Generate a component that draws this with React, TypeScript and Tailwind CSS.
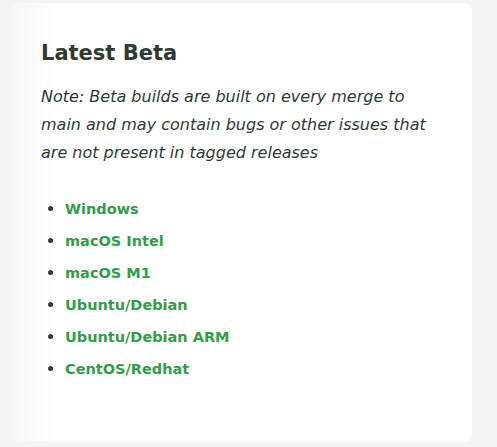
const LINKS = ['Windows', 'macOS Intel', 'macOS M1', 'Ubuntu/Debian', 'Ubuntu/Debian ARM', 'CentOS/Redhat']

export default function App() {
  return (
    <div className="h-[447px] w-[497px] bg-[#f3f3f3] pt-[3px] pl-[9px] font-['DejaVu_Sans',sans-serif]">
      <div className="h-[439px] w-[463px] rounded-lg bg-[linear-gradient(to_right,#f5f5f5,#ffffff_45px)] px-8 pt-[34px]">
        <h2 className="text-[21px] font-bold leading-8 text-[#2e3a31]">Latest Beta</h2>
        <p className="mt-[14px] max-w-[400px] text-[16px] italic leading-[28px] text-[#2e3a31]">
          Note: Beta builds are built on every merge to main and may contain bugs or other issues that are not present in
          tagged releases
        </p>
        <ul className="mt-[26px] list-disc pl-6 text-[#2e3a31] marker:text-[#2e3a31]">
          {LINKS.map(l => (
            <li key={l} className="leading-8">
              <a href="#" className="text-[14.5px] font-semibold text-[#2f9e48]">
                {l}
              </a>
            </li>
          ))}
        </ul>
      </div>
    </div>
  )
}
